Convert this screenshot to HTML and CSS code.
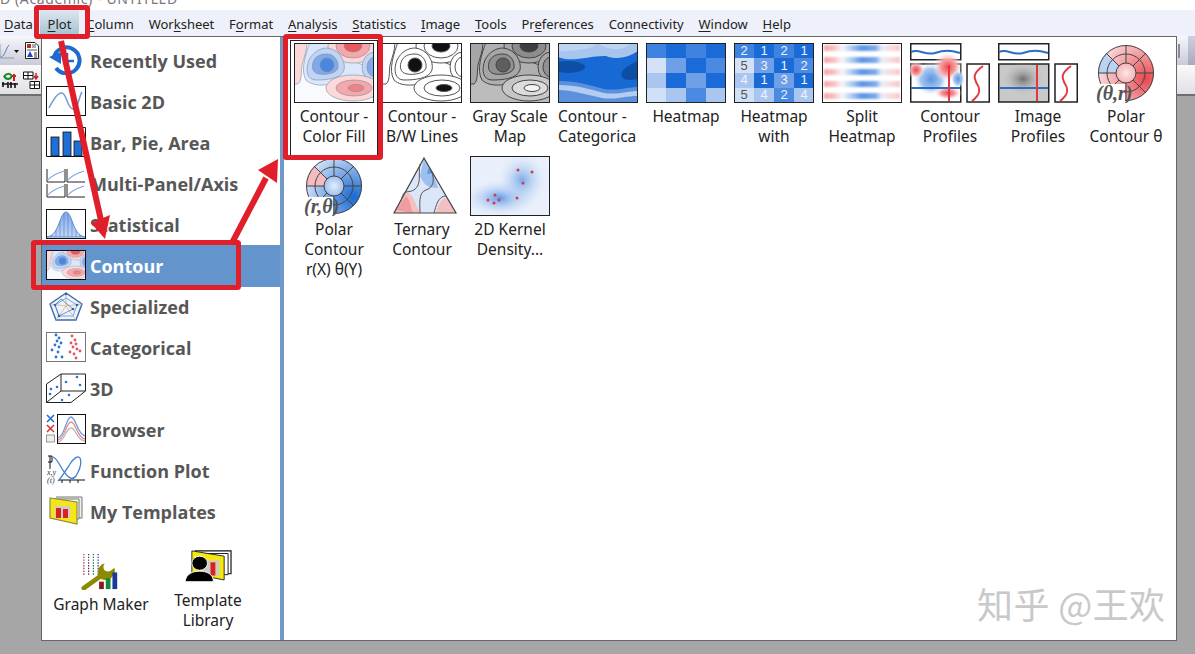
FILE: index.html
```html
<!DOCTYPE html>
<html lang="en">
<head>
<meta charset="utf-8">
<title>Plot menu</title>
<link rel="stylesheet" href="styles.css">
</head>
<body>
<svg class="defs" width="0" height="0" aria-hidden="true">
  <defs>
    <filter id="soft" x="-5%" y="-30%" width="110%" height="160%"><feGaussianBlur stdDeviation=".8"/></filter>
    <linearGradient id="bell" x1="0" y1="0" x2="0" y2="1"><stop offset="0" stop-color="#7ea7e4"/><stop offset="1" stop-color="#c3d6f4"/></linearGradient>
    <linearGradient id="split" x1="0" y1="0" x2="1" y2="0">
      <stop offset="0" stop-color="#f3a5a8"/><stop offset=".14" stop-color="#f6c4c6"/><stop offset=".24" stop-color="#f4f6fb"/><stop offset=".34" stop-color="#bcd2f2"/><stop offset=".5" stop-color="#5a94e2"/><stop offset=".68" stop-color="#7eaae8"/><stop offset=".76" stop-color="#e6eefa"/><stop offset=".9" stop-color="#f9d9da"/><stop offset="1" stop-color="#f6c4c6"/>
    </linearGradient>
    <radialGradient id="heat-blue"><stop offset="0" stop-color="#5b96e2"/><stop offset=".6" stop-color="#a9c7f0"/><stop offset="1" stop-color="#fff" stop-opacity="0"/></radialGradient>
    <radialGradient id="heat-red"><stop offset="0" stop-color="#ee4a50"/><stop offset=".5" stop-color="#f6a0a3"/><stop offset="1" stop-color="#fff" stop-opacity="0"/></radialGradient>
    <radialGradient id="gray-dark"><stop offset="0" stop-color="#6f6f6f"/><stop offset="1" stop-color="#ccc" stop-opacity="0"/></radialGradient>
    <radialGradient id="kde1"><stop offset="0" stop-color="#5f9ae6"/><stop offset="1" stop-color="#dfe9f9" stop-opacity="0"/></radialGradient>
    <radialGradient id="polar-red" cx=".85" cy=".6" r=".9"><stop offset="0" stop-color="#e8484f"/><stop offset=".55" stop-color="#f3a5a8"/><stop offset="1" stop-color="#fbe3e3"/></radialGradient>
    <radialGradient id="polar-blue" cx=".85" cy=".7" r=".9"><stop offset="0" stop-color="#1a69d2"/><stop offset=".5" stop-color="#78a6e6"/><stop offset="1" stop-color="#d7e4f8"/></radialGradient>
    <radialGradient id="hub-red"><stop offset="0" stop-color="#fde6e6"/><stop offset="1" stop-color="#f4b4b6"/></radialGradient>
    <radialGradient id="hub-blue"><stop offset="0" stop-color="#e5eefb"/><stop offset="1" stop-color="#9dbfee"/></radialGradient>

    <symbol id="contour" viewBox="0 0 80 60">
      <g class="ct">
        <rect class="ct-bg" width="80" height="60"/>
        <path class="ct-c0" d="M16 -1H42C48 8 56 19 70 22L81 18V40C70 34 60 31 50 35C40 43 20 45 12 37C6 27 12 10 16 -1Z"/>
        <path class="ct-p1" d="M-1 -1H13C13 8 10 14 8 22C7 30 8 38 4 41L-1 41Z"/>
        <ellipse class="ct-p1" cx="59" cy="3" rx="25" ry="17"/>
        <ellipse class="ct-p2" cx="59" cy="3" rx="17" ry="12"/>
        <ellipse class="ct-p3" cx="59" cy="3" rx="9" ry="6"/>
        <path class="ct-c1" d="M33 5C45 6 52 18 50 27C47 36 32 37 22 37C13 37 11 27 15 17C19 9 26 5 33 5Z"/>
        <path class="ct-c2" d="M33 11C41 11 45 19 44 25C42 31 31 32 25 31C18 30 17 23 20 17C23 12 28 11 33 11Z"/>
        <ellipse class="ct-c3" cx="33" cy="22" rx="7" ry="7"/>
        <ellipse class="ct-c1" cx="81" cy="24" rx="13" ry="15"/>
        <ellipse class="ct-c2" cx="81" cy="24" rx="8" ry="10"/>
        <ellipse class="ct-q1" cx="59" cy="45" rx="27" ry="13"/>
        <ellipse class="ct-q2" cx="60" cy="45" rx="18" ry="8"/>
        <ellipse class="ct-q3" cx="62" cy="45" rx="8" ry="3.5"/>
      </g>
    </symbol>

    <symbol id="heatgrid" viewBox="0 0 80 60">
      <rect width="20" height="15" fill="#3f83e0"/><rect x="20" width="20" height="15" fill="#1a6bd8"/><rect x="40" width="20" height="15" fill="#3f83e0"/><rect x="60" width="20" height="15" fill="#1a6bd8"/>
      <rect y="15" width="20" height="15" fill="#d4e2f8"/><rect x="20" y="15" width="20" height="15" fill="#6f9fe6"/><rect x="40" y="15" width="20" height="15" fill="#1a6bd8"/><rect x="60" y="15" width="20" height="15" fill="#4a8ae2"/>
      <rect y="30" width="20" height="15" fill="#a9c6f0"/><rect x="20" y="30" width="20" height="15" fill="#1a6bd8"/><rect x="40" y="30" width="20" height="15" fill="#6f9fe6"/><rect x="60" y="30" width="20" height="15" fill="#1a6bd8"/>
      <rect y="45" width="20" height="15" fill="#cfe0f7"/><rect x="20" y="45" width="20" height="15" fill="#a9c6f0"/><rect x="40" y="45" width="20" height="15" fill="#4a8ae2"/><rect x="60" y="45" width="20" height="15" fill="#a9c6f0"/>
    </symbol>

    <symbol id="polar-grid" viewBox="0 0 60 60">
      <g class="pg">
        <circle cx="30" cy="30" r="27.500"/><circle cx="30" cy="30" r="19"/><circle cx="30" cy="30" r="10"/>
        <path d="M30 2V20M30 40V58M2 30H20M40 30H58M10 10L23 23M37 37L50 50M50 10L37 23M10 50L23 37"/>
      </g>
    </symbol>
  </defs>
</svg>

<div class="screen">
  <div class="titlebar"><span class="title-text">D (Academic) - UNTITLED</span></div>
  <nav class="menubar">
    <span class="menu"><u>D</u>ata</span>
    <span class="menu menu-active"><u>P</u>lot</span>
    <span class="menu"><u>C</u>olumn</span>
    <span class="menu">Wor<u>k</u>sheet</span>
    <span class="menu">F<u>o</u>rmat</span>
    <span class="menu"><u>A</u>nalysis</span>
    <span class="menu"><u>S</u>tatistics</span>
    <span class="menu"><u>I</u>mage</span>
    <span class="menu"><u>T</u>ools</span>
    <span class="menu">Pr<u>e</u>ferences</span>
    <span class="menu">Co<u>n</u>nectivity</span>
    <span class="menu"><u>W</u>indow</span>
    <span class="menu"><u>H</u>elp</span>
  </nav>
  <div class="toolbars">
    <div class="tool-row tool-row-a">
      <svg class="tool tool-curve" viewBox="0 0 20 18"><path d="M0 2V16H14" fill="none" stroke="#999" stroke-width="1"/><path d="M1 15C5 14 6 6 9 3" fill="none" stroke="#4f7fc4" stroke-width="1"/><path d="M14 8H19L16.500 11Z" fill="#111"/></svg>
      <svg class="tool tool-page" viewBox="0 0 14 17"><path d="M.5.5H10L13.500 4V16.500H.5Z" fill="#fff" stroke="#222"/><rect x="2" y="2" width="4" height="4" fill="#a33"/><path d="M7 3H11M7 5H11M2 8H12" stroke="#555"/><path d="M2 15L5 9L8 15Z" fill="#1b4fc0"/><path d="M9 11H12M9 13H12M9 15H12" stroke="#333"/></svg>
      <span class="tool-spacer"></span>
      <span class="tool-sep"></span>
      <span class="tool-btn"></span>
    </div>
    <div class="tool-row tool-row-b">
      <svg class="tool tool-arrows" viewBox="0 0 16 16"><path d="M2 5C4 1 8 1 10 4" fill="none" stroke="#1a8a2a" stroke-width="2"/><path d="M2 4C4 8 8 8 10 4" fill="none" stroke="#1a8a2a" stroke-width="2"/><path d="M12 2V9M10 4L14 4" stroke="#c22" stroke-width="2"/><path d="M1 15V10M0 12H6M6 16V10M9 16V10M7 12H16M13 16V11" stroke="#111" stroke-width="1.600"/></svg>
      <svg class="tool tool-table" viewBox="0 0 17 18"><path d="M.5 1H10V8H.5ZM.5 4.500H10M5 1V8" fill="#fff" stroke="#111"/><path d="M13 2V7M11 5L13 8L15 5" fill="none" stroke="#c22" stroke-width="1.500"/><path d="M7 10.500H16.500V17.500H7ZM7 14H16.500M11.500 10.500V17.500" fill="#fff" stroke="#111"/></svg>
    </div>
  </div>
  <div class="workspace"></div>
</div>

<section class="dialog">
  <aside class="categories">
    <ul class="cat-list">
      <li class="cat">
        <svg class="cat-icon" viewBox="0 0 40 30"><path d="M8 12A13 13 0 1 1 10 23" fill="none" stroke="#1d6ad0" stroke-width="4"/><path d="M3 12L15 7V19Z" fill="#1d6ad0"/><path d="M21 8V16H28" fill="none" stroke="#1d6ad0" stroke-width="2.500"/></svg>
        <span>Recently Used</span>
      </li>
      <li class="cat">
        <svg class="cat-icon" viewBox="0 0 40 30"><rect x=".5" y=".5" width="39" height="29" fill="#fff" stroke="#111"/><path d="M3 22C8 12 12 6 16 7C21 8 21 22 27 23C32 24 33 10 36 6" fill="none" stroke="#6f9bd8" stroke-width="1.500"/></svg>
        <span>Basic 2D</span>
      </li>
      <li class="cat">
        <svg class="cat-icon" viewBox="0 0 40 30"><path d="M.5 29.500V.5H39.500V29.500Z" fill="#fff" stroke="#111"/><rect x="5" y="10" width="8" height="19" fill="#1e6fd6" stroke="#111" stroke-width=".8"/><rect x="17" y="5" width="8" height="24" fill="#1e6fd6" stroke="#111" stroke-width=".8"/><rect x="28" y="14" width="8" height="15" fill="#1e6fd6" stroke="#111" stroke-width=".8"/></svg>
        <span>Bar, Pie, Area</span>
      </li>
      <li class="cat">
        <svg class="cat-icon" viewBox="0 0 40 30"><path d="M1 1V14H19V1M21 1V14H39M1 16V29H19V16M21 16V29H39" fill="none" stroke="#222"/><path d="M2 12C6 7 12 5 18 3M22 12C26 7 32 5 38 3M2 27C6 22 12 20 18 18M22 27C26 22 32 20 38 18" fill="none" stroke="#7ba3dc" stroke-width="1.200"/></svg>
        <span>Multi-Panel/Axis</span>
      </li>
      <li class="cat">
        <svg class="cat-icon" viewBox="0 0 40 30"><rect x=".5" y=".5" width="39" height="29" fill="#fff" stroke="#111"/><path d="M1 28C8 27 11 20 14 12C16 6 18 3 20 3C22 3 24 6 26 12C29 20 32 27 39 28Z" fill="url(#bell)" stroke="#5b8ad0"/><path d="M6 28V26M10 28V21M14 28V12M18 28V4M22 28V4M26 28V12M30 28V21M34 28V26" stroke="#5b8ad0" stroke-width=".7"/></svg>
        <span>Statistical</span>
      </li>
      <li class="cat cat-active">
        <svg class="cat-icon cf" viewBox="0 0 40 30"><use href="#contour" width="40" height="30"/><rect x=".5" y=".5" width="39" height="29" fill="none" stroke="#111"/></svg>
        <span>Contour</span>
      </li>
      <li class="cat">
        <svg class="cat-icon" viewBox="0 0 40 30"><path d="M20 2L36 13L30 29H10L4 13Z" fill="#eef3fb" stroke="#3f6aa8" stroke-width="1.400"/><path d="M20 7L31 14L27 25H13L9 14Z" fill="none" stroke="#7ba3dc"/><path d="M20 15L20 2M20 15L36 13M20 15L30 29M20 15L10 29M20 15L4 13" stroke="#c8ac78" stroke-width=".7"/><path d="M15 8L27 18L13 25L9 14Z" fill="none" stroke="#3f6aa8" stroke-width=".7"/><g fill="#2a66b8"><circle cx="20" cy="3" r="1.300"/><circle cx="9" cy="14" r="1.300"/><circle cx="27" cy="18" r="1.300"/><circle cx="13" cy="25" r="1.300"/><circle cx="31" cy="14" r="1.300"/></g></svg>
        <span>Specialized</span>
      </li>
      <li class="cat">
        <svg class="cat-icon" viewBox="0 0 40 30"><rect x=".5" y=".5" width="39" height="29" fill="#fff" stroke="#777"/><g fill="#2f74cc"><circle cx="10" cy="3" r="1.400"/><circle cx="13" cy="6" r="1.400"/><circle cx="11" cy="9" r="1.400"/><circle cx="15" cy="11" r="1.400"/><circle cx="9" cy="13" r="1.400"/><circle cx="13" cy="15" r="1.400"/><circle cx="6" cy="18" r="1.400"/><circle cx="12" cy="20" r="1.400"/><circle cx="10" cy="25" r="1.400"/><circle cx="16" cy="25" r="1.400"/></g><g fill="#e0585e"><circle cx="26" cy="4" r="1.400"/><circle cx="29" cy="8" r="1.400"/><circle cx="25" cy="11" r="1.400"/><circle cx="30" cy="12" r="1.400"/><circle cx="27" cy="15" r="1.400"/><circle cx="31" cy="17" r="1.400"/><circle cx="24" cy="20" r="1.400"/><circle cx="28" cy="22" r="1.400"/><circle cx="34" cy="19" r="1.400"/><circle cx="30" cy="26" r="1.400"/></g></svg>
        <span>Categorical</span>
      </li>
      <li class="cat">
        <svg class="cat-icon" viewBox="0 0 40 30"><path d="M.5 11L15 1H39.500V18L25 29.500H.5ZM.5 29.500L15 18H39.500M15 1V18" fill="#fff" stroke="#222"/><g fill="#2f74cc"><circle cx="5" cy="16" r="1.300"/><circle cx="4" cy="21" r="1.300"/><circle cx="20" cy="9" r="1.300"/><circle cx="31" cy="4" r="1.300"/><circle cx="34" cy="12" r="1.300"/><circle cx="16" cy="27" r="1.300"/><circle cx="23" cy="22" r="1.300"/><circle cx="11" cy="14" r="1.300"/></g></svg>
        <span>3D</span>
      </li>
      <li class="cat">
        <svg class="cat-icon" viewBox="0 0 40 30"><rect x="11.500" y=".5" width="28" height="29" fill="#fff" stroke="#111"/><path d="M12 24C19 22 20 3 25 3C30 3 31 20 39 22" fill="none" stroke="#6f9bd8" stroke-width="1.300"/><path d="M12 26C19 25 20 8 25 8C30 8 31 24 39 25" fill="none" stroke="#e78d90" stroke-width="1.300"/><path d="M12 28C19 27 20 14 25 14C30 14 31 27 39 27" fill="none" stroke="#bbb" stroke-width="1.300"/><path d="M1 1L8 8M8 1L1 8" stroke="#1f6fd0" stroke-width="1.600"/><path d="M1 11L8 18M8 11L1 18" stroke="#d9343c" stroke-width="1.600"/><rect x=".5" y="21" width="8" height="7" fill="#eee" stroke="#999"/></svg>
        <span>Browser</span>
      </li>
      <li class="cat">
        <svg class="cat-icon" viewBox="0 0 40 30"><path d="M2 1H6V7H2M4 1V14" fill="none" stroke="#111"/><text class="fn-text" x="1" y="20">x,y</text><text class="fn-text" x="1" y="28">(t)</text><path d="M13 25H39M16 25V28M24 25V28M32 25V28" stroke="#111" fill="none"/><path d="M7 2C12 4 14 12 19 18C23 24 27 25 30 21C33 16 36 8 34 3C32 0 28 3 24 9C20 15 16 22 12 26" fill="none" stroke="#3f7fd0" stroke-width="1.300"/></svg>
        <span>Function Plot</span>
      </li>
      <li class="cat">
        <svg class="cat-icon" viewBox="0 0 40 30"><path d="M10 1H36V22H33" fill="#eee" stroke="#777"/><path d="M7 3H33V23H30" fill="#fff" stroke="#777"/><path d="M4 2L31 6V28L4 22Z" fill="#f4e619" stroke="#8a8a3a" stroke-width="1.200"/><rect x="9" y="10" width="15" height="12" fill="#ccc"/><rect x="10" y="12" width="5" height="10" fill="#d8241d"/><rect x="17" y="13" width="5" height="9" fill="#d8241d"/></svg>
        <span>My Templates</span>
      </li>
    </ul>
    <div class="cat-tools">
      <div class="tool-item tool-maker">
        <svg class="maker-icon" viewBox="0 0 42 40" preserveAspectRatio="none"><g fill="none" stroke-width="1.300" stroke-dasharray="1.500 1.500"><path d="M3 1V25" stroke="#a33"/><path d="M8 1V25" stroke="#5a2a8a"/><path d="M13 1V25" stroke="#2a7a3a"/><path d="M18 1V25" stroke="#1a3a8a"/></g><path d="M3 38L23 23" stroke="#8e8a00" stroke-width="5" stroke-linecap="round"/><path d="M35 16A10 10 0 0 1 21 28A10 10 0 0 1 25 11C22 15 24 20 28 20C31 20 33 18 35 16Z" fill="#8e8a00"/><rect x="19" y="31" width="5" height="8" fill="#8a1a1a"/><rect x="26" y="27" width="5" height="12" fill="#1a8a3a"/><rect x="33" y="21" width="5" height="18" fill="#1a3a9a"/></svg>
        <span>Graph Maker</span>
      </div>
      <div class="tool-item tool-lib">
        <svg class="lib-icon" viewBox="0 0 48 42" preserveAspectRatio="none"><path d="M10 1H47V27H42" fill="#fff" stroke="#111" stroke-width="1.200"/><path d="M12 4H44V28H40" fill="#fff" stroke="#111"/><path d="M7 1L40 7V34L7 27Z" fill="#f5e711" stroke="#222" stroke-width="1"/><rect x="18" y="12" width="17" height="17" fill="#ccc"/><rect x="26" y="14" width="5" height="15" fill="#d8241d"/><circle cx="15" cy="15" r="8" fill="#000" stroke="#fff"/><path d="M0 36C1 27 8 24 15 24C22 24 29 27 29 36Z" fill="#000" stroke="#fff"/></svg>
        <span>Template<br>Library</span>
      </div>
    </div>
  </aside>

  <div class="gallery">
    <div class="tile tile-selected">
      <svg class="thumb cf" viewBox="0 0 80 60"><use href="#contour" width="80" height="60"/><rect x=".5" y=".5" width="79" height="59" fill="none" stroke="#222"/></svg>
      <span class="label">Contour - Color Fill</span>
    </div>
    <div class="tile">
      <svg class="thumb bw" viewBox="0 0 80 60"><use href="#contour" width="80" height="60"/><rect x=".5" y=".5" width="79" height="59" fill="none" stroke="#222"/></svg>
      <span class="label">Contour - B/W Lines</span>
    </div>
    <div class="tile">
      <svg class="thumb gs" viewBox="0 0 80 60"><use href="#contour" width="80" height="60"/><rect x=".5" y=".5" width="79" height="59" fill="none" stroke="#222"/></svg>
      <span class="label">Gray Scale Map</span>
    </div>
    <div class="tile">
      <svg class="thumb" viewBox="0 0 80 60"><rect width="80" height="60" fill="#1769d3"/><path d="M0 0H80V8C70 15 58 17 48 13C34 12 14 20 0 14Z" fill="#a8c5ee"/><path d="M0 0H38C40 5 20 8 0 8ZM40 0H72C68 8 50 8 40 0Z" fill="#bfd4f3"/><ellipse cx="10" cy="24" rx="17" ry="6" fill="#0e4fa6"/><path d="M80 18C70 22 58 30 66 36C72 38 78 36 80 36Z" fill="#0e4fa6"/><path d="M0 38C20 38 30 42 46 46C60 48 70 44 80 44V60H0Z" fill="#5b90dd"/><path d="M0 42C20 42 30 46 46 50C60 52 70 48 80 48V53C66 53 58 57 44 55C30 52 14 47 0 47Z" fill="#b3cdf1"/><rect x=".5" y=".5" width="79" height="59" fill="none" stroke="#222"/></svg>
      <span class="label label-clip">Contour - Categorical</span>
    </div>
    <div class="tile">
      <svg class="thumb" viewBox="0 0 80 60"><use href="#heatgrid" width="80" height="60"/><rect x=".5" y=".5" width="79" height="59" fill="none" stroke="#222"/></svg>
      <span class="label">Heatmap</span>
    </div>
    <div class="tile">
      <svg class="thumb" viewBox="0 0 80 60"><use href="#heatgrid" width="80" height="60"/><g class="hm-num"><text x="10" y="12">2</text><text x="30" y="12">1</text><text x="50" y="12">2</text><text x="70" y="12">1</text><text class="hm-dark" x="10" y="26.500">5</text><text x="30" y="26.500">3</text><text x="50" y="26.500">1</text><text x="70" y="26.500">2</text><text x="10" y="41">4</text><text x="30" y="41">1</text><text x="50" y="41">3</text><text x="70" y="41">1</text><text class="hm-dark" x="10" y="56">5</text><text x="30" y="56">4</text><text x="50" y="56">2</text><text x="70" y="56">4</text></g><rect x=".5" y=".5" width="79" height="59" fill="none" stroke="#222"/></svg>
      <span class="label">Heatmap with</span>
    </div>
    <div class="tile">
      <svg class="thumb" viewBox="0 0 80 60"><rect width="80" height="60" fill="#fff"/><g fill="url(#split)" filter="url(#soft)"><rect x="2" y="2" width="76" height="6"/><rect x="2" y="14" width="76" height="6"/><rect x="2" y="26" width="76" height="6"/><rect x="2" y="38" width="76" height="6"/><rect x="2" y="50" width="76" height="6"/></g><rect x=".5" y=".5" width="79" height="59" fill="none" stroke="#222"/></svg>
      <span class="label">Split Heatmap</span>
    </div>
    <div class="tile">
      <svg class="thumb" viewBox="0 0 80 60"><rect x=".75" y=".75" width="50" height="16" fill="#fff" stroke="#222" stroke-width="1.500"/><path d="M1 9C9 5 15 13 25 10C34 7 40 7 50 10" fill="none" stroke="#2c6cc4" stroke-width="2"/><rect x=".75" y="21" width="50" height="38" fill="#fff" stroke="#222" stroke-width="1.500"/><ellipse cx="21" cy="36" rx="18" ry="17" fill="url(#heat-blue)"/><ellipse cx="38" cy="24" rx="15" ry="15" fill="url(#heat-red)"/><ellipse cx="6" cy="27" rx="9" ry="9" fill="url(#heat-red)"/><ellipse cx="48" cy="36" rx="7" ry="9" fill="url(#heat-blue)"/><ellipse cx="38" cy="50" rx="14" ry="7" fill="url(#heat-red)"/><path d="M1 45H50" stroke="#2c6cc4" stroke-width="2"/><path d="M39 22V58" stroke="#e2393f" stroke-width="2"/><rect x="57" y="21" width="22.250" height="38" fill="#fff" stroke="#222" stroke-width="1.500"/><path d="M73 23C62 31 64 35 67 41C71 47 70 52 62 58" fill="none" stroke="#e2393f" stroke-width="2"/></svg>
      <span class="label">Contour Profiles</span>
    </div>
    <div class="tile">
      <svg class="thumb" viewBox="0 0 80 60"><rect x=".75" y=".75" width="50" height="16" fill="#fff" stroke="#222" stroke-width="1.500"/><path d="M1 9C9 5 15 13 25 10C34 7 40 7 50 10" fill="none" stroke="#2c6cc4" stroke-width="2"/><rect x=".75" y="21" width="50" height="38" fill="#c9c9c9" stroke="#222" stroke-width="1.500"/><ellipse cx="25" cy="36" rx="22" ry="17" fill="url(#gray-dark)"/><path d="M1 45H50" stroke="#2c6cc4" stroke-width="2"/><path d="M39 22V58" stroke="#e2393f" stroke-width="2"/><rect x="57" y="21" width="22.250" height="38" fill="#fff" stroke="#222" stroke-width="1.500"/><path d="M73 23C62 31 64 35 67 41C71 47 70 52 62 58" fill="none" stroke="#e2393f" stroke-width="2"/></svg>
      <span class="label">Image Profiles</span>
    </div>
    <div class="tile">
      <svg class="thumb" viewBox="0 0 80 60"><g transform="translate(10 0)"><circle cx="30" cy="30" r="28" fill="url(#polar-red)"/><path d="M30 30L2 30A28 28 0 0 1 10 10Z" fill="#bcd2f2"/><circle cx="30" cy="30" r="10" fill="url(#hub-red)"/><use href="#polar-grid" width="60" height="60"/></g><path d="M8 41H39V60H8Z" fill="#fff"/><text class="polar-text" x="10" y="57">(θ,r)</text></svg>
      <span class="label">Polar Contour θ</span>
    </div>
    <div class="tile">
      <svg class="thumb" viewBox="0 0 80 60"><g transform="translate(10 0)"><circle cx="30" cy="30" r="28" fill="url(#polar-blue)"/><path d="M30 30L2 30A28 28 0 0 1 10 10Z" fill="#f4bcbe"/><circle cx="30" cy="30" r="10" fill="url(#hub-blue)"/><use href="#polar-grid" width="60" height="60"/></g><path d="M8 41H39V60H8Z" fill="#fff"/><text class="polar-text" x="10" y="57">(r,θ)</text></svg>
      <span class="label">Polar Contour r(X) θ(Y)</span>
    </div>
    <div class="tile">
      <svg class="thumb" viewBox="0 0 80 60"><path d="M42 2L74 57H12Z" fill="#dbe7f9"/><path d="M42 2L51 17L56 32C44 32 42 28 38 20Z" fill="#9dbfee"/><path d="M45 18L51 17L47 11Z" fill="#5d93e0"/><path d="M12 57L24 36C32 38 33 48 38 57Z" fill="#f4bfc0"/><path d="M14 54L24 40C29 44 28 52 31 57Z" fill="#ee9c9e"/><path d="M74 57L65 42C58 42 56 50 54 57Z" fill="#f4bfc0"/><path d="M42 2L74 57H12Z" fill="none" stroke="#444" stroke-width="1.200"/><path d="M38 8C36 20 40 28 32 34C24 38 22 32 19 45M49 14C54 26 50 32 44 34C36 36 38 50 38 57M64 40C56 40 54 50 52 57" fill="none" stroke="#555" stroke-width="1"/></svg>
      <span class="label">Ternary Contour</span>
    </div>
    <div class="tile">
      <svg class="thumb" viewBox="0 0 80 60"><rect width="80" height="60" fill="#eaf0fb"/><ellipse cx="30" cy="42" rx="38" ry="19" fill="url(#kde1)"/><ellipse cx="52" cy="24" rx="26" ry="28" fill="url(#kde1)" opacity=".8"/><g fill="#d8394a"><circle cx="48" cy="14" r="1.500"/><circle cx="62" cy="16" r="1.500"/><circle cx="53" cy="27" r="1.500"/><circle cx="47" cy="42" r="1.500"/><circle cx="25" cy="39" r="1.500"/><circle cx="29" cy="44" r="1.500"/><circle cx="18" cy="44" r="1.500"/><circle cx="24" cy="47" r="1.500"/></g><rect x=".5" y=".5" width="79" height="59" fill="none" stroke="#222"/></svg>
      <span class="label">2D Kernel Density...</span>
    </div>
  </div>
  <div class="watermark">知乎 @王欢</div>
</section>

<svg class="annotations" viewBox="0 0 1195 654" aria-hidden="true">
  <g class="note-box">
    <rect x="36.500" y="7.500" width="51" height="29" rx="1"/>
    <rect x="33.500" y="242.500" width="205" height="45" rx="1"/>
    <rect x="285.500" y="36.500" width="95" height="121" rx="1"/>
  </g>
  <g class="note-arrow">
    <path d="M61 41L102 225"/>
    <path d="M232 243L266 178"/>
  </g>
  <g class="note-head">
    <path d="M91 223L110 215L105 239Z"/>
    <path d="M258 170L278 159L277 183Z"/>
  </g>
</svg>
</body>
</html>
```
FILE: styles.css
```css
* { box-sizing: border-box; }
html, body { margin: 0; padding: 0; }
body {
  width: 1195px;
  height: 654px;
  overflow: hidden;
  position: relative;
  background: #a6a6a6;
  font-family: "Noto Sans", "Open Sans", sans-serif;
  color: #222;
}
.defs { position: absolute; }

.screen { display: flex; flex-direction: column; height: 100%; }
.titlebar { height: 10px; background: #fff; overflow: hidden; }
.title-text { display: block; margin-top: -9px; font-size: 14px; line-height: 16px; color: #777; letter-spacing: .6px; }

.menubar {
  height: 26px;
  background: #eef1f9;
  display: flex;
  gap: 14.800px;
  align-items: center;
  padding: 2px 0 0 4px;
  font-size: 13px;
  color: #222;
}
.menu { position: relative; z-index: 0; white-space: nowrap; }
.menu u { text-underline-offset: 2px; }
.menu-active::before {
  content: "";
  position: absolute;
  z-index: -1;
  left: -8px;
  right: -8px;
  top: -8px;
  bottom: -6px;
  background: linear-gradient(#e3ebf3, #9fbccc);
}

.toolbars { height: 60px; display: flex; flex-direction: column; border-bottom: 2px solid #6e6e6e; }
.tool-row { height: 29px; display: flex; align-items: center; }
.tool-row-a { background: linear-gradient(#f6f6fb, #c9cbda); }
.tool-row-b { background: linear-gradient(#fafafa, #dfdfe6); flex: 1; }
.tool { display: block; flex: none; }
.tool-curve { width: 20px; height: 18px; }
.tool-page { width: 14px; height: 17px; margin-left: 5px; }
.tool-arrows { width: 16px; height: 16px; margin-left: 2px; }
.tool-table { width: 17px; height: 18px; margin-left: 5px; }
.tool-spacer { flex: 1; }
.tool-sep { width: 2px; height: 14px; background: #8c8c96; margin-right: 8px; }
.tool-btn { width: 7px; height: 100%; background: linear-gradient(#cfcfe0, #a9a9bc); }
.workspace { flex: 1; background: #a6a6a6; }

.dialog {
  position: absolute;
  left: 41px;
  top: 36px;
  width: 1136px;
  height: 605px;
  background: #fff;
  border: 1px solid #666;
  display: flex;
}
.categories {
  width: 242px;
  flex: none;
  border-right: 4px solid #7099c8;
  display: flex;
  flex-direction: column;
  padding-top: 3px;
}
.cat-list { list-style: none; margin: 0; padding: 0; }
.cat {
  height: 41px;
  display: flex;
  align-items: center;
  gap: 4px;
  padding-left: 4px;
  font-family: "Open Sans", "Noto Sans", sans-serif;
  font-weight: 700;
  font-size: 18px;
  color: #575757;
}
.cat-active { background: #6395cc; color: #fff; box-shadow: 0 1px 0 #6395cc; }
.cat-icon { width: 40px; height: 30px; flex: none; display: block; margin-bottom: 2px; }
.fn-text { font: italic 8px "Liberation Serif", serif; fill: #333; }

.cat-tools {
  display: grid;
  grid-template-columns: 100px 100px;
  gap: 7px;
  padding-left: 9px;
  margin-top: 16px;
}
.tool-item {
  display: flex;
  flex-direction: column;
  align-items: center;
  font-size: 15.500px;
  line-height: 20px;
  text-align: center;
  color: #222;
}
.tool-maker { padding-top: 5px; }
.tool-lib { padding-top: 2px; }
.maker-icon { width: 40px; height: 37px; display: block; margin-bottom: 4px; }
.lib-icon { width: 47px; height: 37px; display: block; margin-bottom: 3px; }

.gallery {
  flex: 1;
  display: grid;
  grid-template-columns: repeat(10, 88px);
  grid-auto-rows: 113px;
  align-content: start;
  padding: 6px 0 0 6px;
}
.tile {
  display: flex;
  flex-direction: column;
  align-items: center;
  gap: 3px;
  font-size: 15.500px;
  line-height: 20px;
  text-align: center;
  color: #222;
}
.tile-selected { position: relative; }
.tile-selected::after {
  content: "";
  position: absolute;
  left: 0;
  right: 0;
  top: -3px;
  height: 114px;
  border: 1px solid #222;
}
.thumb { width: 80px; height: 60px; display: block; flex: none; }
.label { width: 80px; display: block; }
.label-clip { overflow: hidden; text-align: left; width: 79px; margin-right: 1px; }

.ct * { stroke: var(--ln); stroke-width: var(--sw); }
.ct .ct-bg { fill: var(--bg); stroke: none; }
.ct-c0 { fill: var(--c0); }
.ct-p1 { fill: var(--p1); }
.ct-p2 { fill: var(--p2); }
.ct-p3 { fill: var(--p3); }
.ct-c1 { fill: var(--c1); }
.ct-c2 { fill: var(--c2); }
.ct-c3 { fill: var(--c3); }
.ct-q1 { fill: var(--q1); }
.ct-q2 { fill: var(--q2); }
.ct-q3 { fill: var(--q3); }
.cf {
  --bg: #f8fafe; --ln: #7f8ba0; --sw: .6px; --c0: #dbe7fa;
  --p1: #fbd9d9; --p2: #f4a8aa; --p3: #e85a5e;
  --c1: #c0d5f5; --c2: #7fa9e8; --c3: #4a88de;
  --q1: #fbd9d9; --q2: #f4a8aa; --q3: #ef8285;
}
.bw {
  --bg: #fff; --ln: #555; --sw: 1px; --c0: #fff;
  --p1: #fff; --p2: #fff; --p3: #111;
  --c1: #fff; --c2: #fff; --c3: #111;
  --q1: #fff; --q2: #fff; --q3: #111;
}
.gs {
  --bg: #bcbcbc; --ln: #444; --sw: 1px; --c0: #b0b0b0;
  --p1: #a6a6a6; --p2: #8c8c8c; --p3: #3e3e3e;
  --c1: #a6a6a6; --c2: #909090; --c3: #5e5e5e;
  --q1: #c6c6c6; --q2: #dcdcdc; --q3: #f4f4f4;
}
.hm-num text { font: 13px "Liberation Sans", sans-serif; fill: #eef4fd; text-anchor: middle; }
.hm-num .hm-dark { fill: #555; }
.pg { fill: none; stroke: #444; stroke-width: 1px; }
.polar-text { font: italic 700 20px "Liberation Serif", serif; fill: #555; }

.watermark {
  position: absolute;
  left: 935px;
  top: 544px;
  font-family: "Noto Sans CJK SC", sans-serif;
  font-size: 36px;
  line-height: 44px;
  letter-spacing: .4px;
  color: #c9c9c9;
  white-space: nowrap;
}

.annotations { position: absolute; left: 0; top: 0; width: 1195px; height: 654px; pointer-events: none; }
.note-box rect { fill: none; stroke: #e01f2b; stroke-width: 5px; }
.note-arrow path { fill: none; stroke: #e01f2b; stroke-width: 6px; }
.note-head path { fill: #e01f2b; }
```
